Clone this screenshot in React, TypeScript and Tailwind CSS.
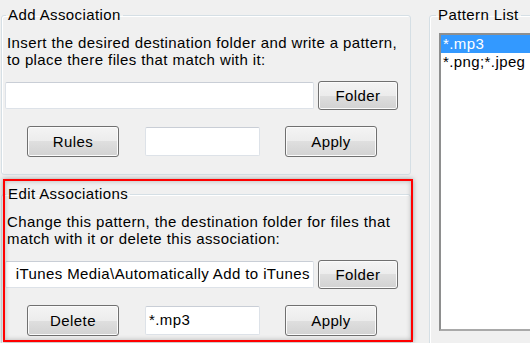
const btn =
  "rounded-[3px] border border-[#707070] bg-[linear-gradient(to_bottom,#f4f4f4_0%,#ececec_50%,#dfdfdf_50%,#d2d2d2_100%)] shadow-[inset_0_0_0_1px_#fbfbfb] text-[15px] tracking-[0.4px] leading-none text-black";

const box =
  "bg-white border border-[#dde2e8] border-t-[#c9ced6] rounded-[2px] overflow-hidden whitespace-nowrap text-[15px] tracking-[0.4px] text-black flex items-center";

function Group({
  title,
  line1,
  line2,
  path,
  pattern,
  leftButton,
}: {
  title: string;
  line1: string;
  line2: string;
  path: string;
  pattern: string;
  leftButton: string;
}) {
  return (
    <fieldset className="ml-[1px] w-[410px] h-[168px] shrink-0 rounded-[3px] border border-[#d5dfe5] shadow-[inset_1px_1px_0_#ffffff]">
      <legend className="ml-[4px] px-[2px] text-[15px] tracking-[0.4px] leading-[16px]">{title}</legend>
      <p className="mt-[11px] pl-[5px] text-[15px] tracking-[0.4px] leading-[17px]">
        {line1}
        <br />
        {line2}
      </p>
      <div className="mt-[13px] ml-[3px] flex h-[29px] items-center gap-[4px]">
        <div className={box + " h-[27px] w-[309px] justify-end pr-[3px]"}>{path}</div>
        <button className={btn + " h-[29px] w-[80px]"}>Folder</button>
      </div>
      <div className="mt-[16px] ml-[25px] flex h-[31px] items-center">
        <button className={btn + " h-[31px] w-[92px]"}>{leftButton}</button>
        <div className={box + " ml-[26px] h-[29px] w-[115px] px-[3px]"}>{pattern}</div>
        <button className={btn + " ml-[25px] h-[31px] w-[92px]"}>Apply</button>
      </div>
    </fieldset>
  );
}

export default function App() {
  return (
    <div
      className="relative flex h-[343px] w-[530px] overflow-hidden bg-[#f0f0f0] text-black"
      style={{ fontFamily: '"Liberation Sans", Arial, sans-serif' }}
    >
      <div className="flex w-[411px] shrink-0 flex-col pt-[7px]">
        <Group
          title="Add Association"
          line1="Insert the desired destination folder and write a pattern,"
          line2="to place there files that match with it:"
          path=""
          pattern=""
          leftButton="Rules"
        />
        <div className="mt-[11px]">
          <Group
            title="Edit Associations"
            line1="Change this pattern, the destination folder for files that"
            line2="match with it or delete this association:"
            path="iTunes Media\Automatically Add to iTunes"
            pattern="*.mp3"
            leftButton="Delete"
          />
        </div>
      </div>

      <fieldset className="ml-[18px] mt-[7px] h-[350px] w-[120px] shrink-0 rounded-[3px] border border-[#d5dfe5] shadow-[inset_1px_1px_0_#ffffff]">
        <legend className="ml-[6px] px-[2px] text-[15px] tracking-[0.4px] leading-[16px]">Pattern List</legend>
        <div className="mt-[10px] ml-[9px] h-[298px] w-[120px] border-2 border-[#a9a9a9] border-t-[#8e8f8f] border-l-[#8e8f8f] bg-white text-[15px] tracking-[0.4px]">
          <div className="h-[18px] bg-[#3399ff] px-[2px] leading-[18px] text-white">*.mp3</div>
          <div className="h-[18px] px-[2px] leading-[18px]">*.png;*.jpeg</div>
        </div>
      </fieldset>

      <div className="pointer-events-none absolute left-[3px] top-[179px] h-[163px] w-[410px] border-2 border-[#ff0000] shadow-[0_0_5px_rgba(0,0,0,0.35),inset_0_0_5px_rgba(0,0,0,0.25)]" />
    </div>
  );
}
